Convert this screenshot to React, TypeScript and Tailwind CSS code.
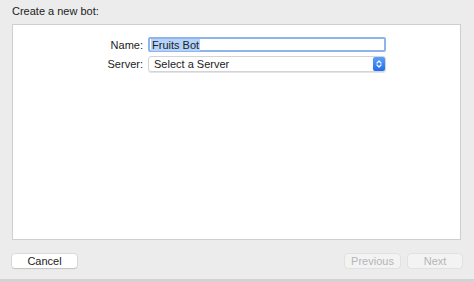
import React from "react";

export default function App() {
  return (
    <div
      className="w-[474px] h-[282px] bg-[#ececec] flex flex-col text-[#222]"
      style={{ fontFamily: '"Liberation Sans", Arial, sans-serif' }}
    >
      <div className="h-[24px] pl-[12px] pt-[4px] text-[11px] leading-[14px]">Create a new bot:</div>
      <div className="mx-[12px] w-[449px] h-[216px] bg-white border border-[#cfcfcf] flex flex-col pt-[12px]">
        <div className="flex items-center h-[15px]">
          <div className="w-[134px] text-right text-[11px] leading-[14px] pr-[4px]">Name:</div>
          <div className="ml-[1px] w-[238px] h-[15px] border-[2px] border-[#8fb4ec] rounded-[2px] flex items-center pl-[1px]">
            <span className="bg-[#b4d4fc] text-[11px] leading-[12px] px-[1px]">Fruits Bot</span>
          </div>
        </div>
        <div className="flex items-center h-[16px] mt-[4px]">
          <div className="w-[134px] text-right text-[11px] leading-[14px] pr-[4px]">Server:</div>
          <div className="ml-[1px] w-[238px] h-[16px] border border-[#d4d4d4] rounded-[3px] shadow-[0_1px_0_#e4e4e4] flex items-center justify-between">
            <span className="pl-[5px] text-[11px] leading-[14px]">Select a Server</span>
            <div className="w-[12px] h-[14px] bg-[#3b82f6] bg-gradient-to-b from-[#5aa0fb] to-[#1f6fe9] rounded-[2px] flex items-center justify-center">
              <svg width="8" height="10" viewBox="0 0 8 10" fill="none" stroke="white" strokeWidth="1.2" strokeLinecap="round" strokeLinejoin="round">
                <path d="M2 4 L4 2 L6 4" />
                <path d="M2 6 L4 8 L6 6" />
              </svg>
            </div>
          </div>
        </div>
      </div>
      <div className="flex items-start px-[12px] mt-[14px]">
        <button className="w-[65px] h-[14px] bg-white rounded-[3px] shadow-[0_0_0_0.5px_#c8c8c8,0_1px_1px_#c0c0c0] text-[11px] leading-[14px] text-[#222]">
          Cancel
        </button>
        <div className="flex-1" />
        <button className="w-[55px] h-[14px] bg-[#f3f3f3] rounded-[3px] shadow-[0_0_0_0.5px_#d6d6d6] text-[11px] leading-[14px] text-[#b5b5b5]">
          Previous
        </button>
        <button className="ml-[8px] w-[54px] h-[14px] bg-[#f3f3f3] rounded-[3px] shadow-[0_0_0_0.5px_#d6d6d6] text-[11px] leading-[14px] text-[#b5b5b5]">
          Next
        </button>
      </div>
      <div className="flex-1" />
      <div className="h-[3px] bg-[#d2d2d2]" />
    </div>
  );
}
